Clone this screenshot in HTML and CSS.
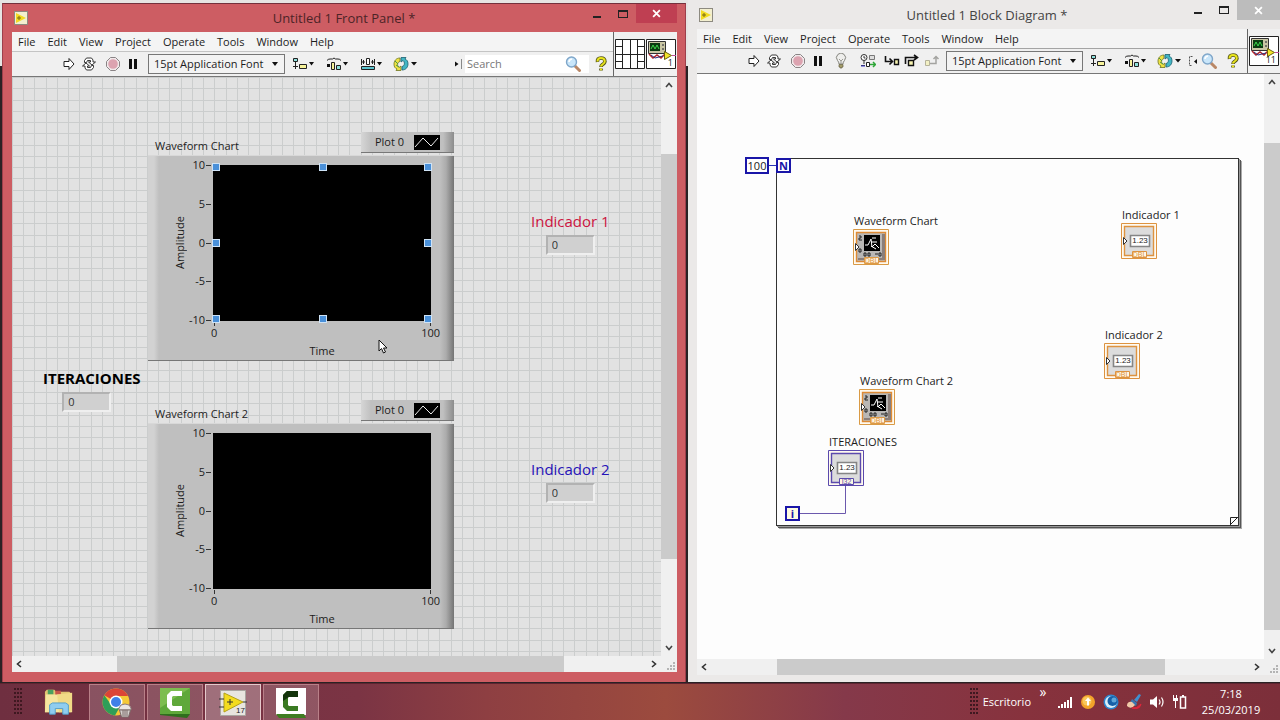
FILE: index.html
```html
<!DOCTYPE html>
<html lang="en">
<head>
<meta charset="utf-8">
<title>Untitled 1 Front Panel</title>
<link rel="stylesheet" href="styles.css">
</head>
<body>
<svg class="sprite" aria-hidden="true">
  <symbol id="i-vi" viewBox="0 0 14 14"><rect x=".5" y=".5" width="13" height="13" fill="#f3efcf" stroke="#8d8a80"/><path d="M2 2l10 5-10 5z" fill="#f3dc22"/><path d="M3 7h4M5 5v4" stroke="#7c6a10"/></symbol>
  <symbol id="i-run" viewBox="0 0 12 14"><path d="M1 4.500h5V1.500L11 7l-5 5.500v-3H1z" fill="#fff" stroke="#222"/></symbol>
  <symbol id="i-loop" viewBox="0 0 16 14"><path d="M3.500 5.500V3.500L5.500 1h5L12 3V5h2.500L11 8 7.500 5h2V3.500H6.500L5.500 5.500z" fill="#fff" stroke="#222" stroke-width=".9"/><path d="M12.500 8.500v2L10.500 13h-5L4 11V9H1.500L5 6l3.500 3h-2v1.500h3l1-2z" fill="#fff" stroke="#222" stroke-width=".9"/></symbol>
  <symbol id="i-abort" viewBox="0 0 14 14"><path d="M4.500.5h5l4 4v5l-4 4h-5l-4-4v-5z" fill="#f0e9ea" stroke="#8a8486"/><circle cx="7" cy="7" r="4.800" fill="#dca3b0"/></symbol>
  <symbol id="i-pause" viewBox="0 0 10 10"><path d="M1 0h3v10H1zM6 0h3v10H6z" fill="#111"/></symbol>
  <symbol id="i-align" viewBox="0 0 22 14"><path d="M1.500 1.500h4v3h-4z" fill="#8ee0dc" stroke="#222"/><path d="M3.500 5v7M1 9.500h5M8 11.500h1" stroke="#222" fill="none"/><path d="M7.500 7.500h7v4h-7z" fill="#f7f39a" stroke="#222"/><path d="M17 5h5l-2.500 3.500z" fill="#111"/></symbol>
  <symbol id="i-dist" viewBox="0 0 22 14"><path d="M1 3.500Q2 2 4 2h2.500L8 1l1.500 1H12q2 0 3 1.500" stroke="#222" fill="none"/><path d="M1 7h3v3H1z" fill="#111"/><path d="M5.500 5.500h3v7h-3z" fill="#f7f39a" stroke="#222"/><path d="M10.500 8.500h4v4h-4z" fill="#8ee0dc" stroke="#222"/><path d="M17 5h5l-2.500 3.500z" fill="#111"/></symbol>
  <symbol id="i-resize" viewBox="0 0 22 14"><path d="M1.500 2v6M14.500 2v6M2 5h3M11 5h3M3.500 3v4M12.500 3v4" stroke="#222" fill="none"/><path d="M6.500 1.500h3v6h-3z" fill="#fff" stroke="#222"/><path d="M1.500 9.500h13v3h-13z" fill="#5cc4cf" stroke="#222"/><path d="M17 5h5l-2.500 3.500z" fill="#111"/></symbol>
  <symbol id="i-order" viewBox="0 0 24 14"><path d="M7 1C3 1 1 4 1 7s1 4 3 5l-1 1.500h5V9L6 10.500C4 9 4 5 7 4.500z" fill="#eee344" stroke="#6e7522" stroke-width=".8"/><path d="M9 13c4 0 6-3 6-6s-1-4-3-5l1-1.500H8V5l2-1.500c2 1.500 2 5.500-1 6z" fill="#42b6c4" stroke="#1c5f70" stroke-width=".8"/><path d="M2 4l3 3M3 8l3 2" stroke="#4a9a48"/><path d="M18 5h6l-3 3.500z" fill="#111"/></symbol>
  <symbol id="i-mag" viewBox="0 0 16 16"><path d="M10 10l4.500 4.500" stroke="#b98766" stroke-width="3" stroke-linecap="round"/><circle cx="6.500" cy="6" r="5" fill="#c9e6fa" stroke="#7fa6c9" stroke-width="1.400"/><path d="M4 6q0-2.500 3-3" stroke="#fff" stroke-width="1.500" fill="none"/></symbol>
  <symbol id="i-help" viewBox="0 0 12 16"><path d="M2.500 6Q2 2 6 2t3.800 3.200Q10 7 7.500 8.500 6 9.500 6 11M6 12.500v2" fill="none" stroke="#555518" stroke-width="3.600"/><path d="M2.500 5.500Q2.500 2 6 2t3.800 3.200Q10 7 7.500 8.500 6 9.500 6 10.500M6 12.500v1.800" fill="none" stroke="#e9e51c" stroke-width="2"/></symbol>
  <symbol id="i-bulb" viewBox="0 0 12 16"><path d="M4 11Q4 9 2.500 7.500a4.500 4.500 0 1 1 7 0Q8 9 8 11z" fill="#eeeeec" stroke="#85857f"/><path d="M4 6l2 2 2-2M6 8v3" stroke="#9a9a94" fill="none"/><path d="M4 11.500h4V14H7v1H5v-1H4z" fill="#a39c6a" stroke="#6a6647" stroke-width=".7"/></symbol>
  <symbol id="i-retain" viewBox="0 0 16 14"><circle cx="4" cy="3.500" r="3" fill="#fff" stroke="#333"/><path d="M4 2v2h1.500M4 6.500V10M1 11.500h4" stroke="#333" fill="none"/><path d="M9.500 1.500h5v4h-5z" fill="#ddd" stroke="#777"/><path d="M6.500 8.500h3v4h-3z" fill="#fff" stroke="#222"/><path d="M1 12h4" stroke="#3a3ad0"/><path d="M10 10.500h5M13 8l2.500 2.500L13 13" stroke="#2ea638" stroke-width="1.500" fill="none"/></symbol>
  <symbol id="i-into" viewBox="0 0 16 12"><path d="M1.500 1v5.500H8M5.500 3.500l3 3-3 3" fill="none" stroke="#111" stroke-width="1.600"/><path d="M10.500 4.500h4v5h-4z" fill="#f7f3b0" stroke="#111" stroke-width="1.400"/></symbol>
  <symbol id="i-over" viewBox="0 0 16 12"><path d="M1.500 9V2.500H12M10 0l3.500 2.500L10 5" fill="none" stroke="#111" stroke-width="1.600"/><path d="M4.500 5.500h5v5h-5z" fill="#f7f3b0" stroke="#111" stroke-width="1.400"/></symbol>
  <symbol id="i-out" viewBox="0 0 16 12"><path d="M1.500 5.500h4v5h-4z" fill="#f2f0c4" stroke="#b5b29a"/><path d="M6 8.500h6V2M9.500 4L12 1.500 14.500 4" fill="none" stroke="#a3a3a0" stroke-width="1.500"/></symbol>
  <symbol id="i-conn" viewBox="0 0 30 30"><path d="M.5.500h29v29H.5z" fill="#fff" stroke="#222"/><path d="M7.500 0v30M15.500 0v30M22.500 0v30M7 15.500h16M0 7.500h7M0 15.500h7M0 22.500h7M23 7.500h7M23 15.500h7M23 22.500h7" stroke="#222"/></symbol>
  <symbol id="i-viicon" viewBox="0 0 30 30"><path d="M.5.500h29v29H.5z" fill="#fff" stroke="#222"/><path d="M2.500 2.500h17v12h-17z" fill="#c9c6a4" stroke="#333"/><path d="M4 4h10v8H4z" fill="#0b3a12"/><path d="M5 10l2-4 2 4 2-4 2 4" stroke="#3dd84c" fill="none"/><circle cx="17" cy="6" r="1" fill="#555"/><circle cx="17" cy="10" r="1" fill="#555"/><path d="M3 15l4 4 4-3 4 3 4-4" stroke="#b3262c" stroke-width="1.500" fill="none"/><path d="M5 16l4 3 8-2" stroke="#28307e" fill="none"/><path d="M18.500 12.500l7 4-7 4z" fill="#f3e42a" stroke="#6b6210"/><path d="M26 16.500h4" stroke="#c04a9c"/></symbol>
  <symbol id="i-up" viewBox="0 0 8 6"><path d="M1 5l3-3.500L7 5" fill="none" stroke="#444" stroke-width="1.600"/></symbol>
  <symbol id="i-down" viewBox="0 0 8 6"><path d="M1 1l3 3.500L7 1" fill="none" stroke="#444" stroke-width="1.600"/></symbol>
  <symbol id="i-left" viewBox="0 0 6 8"><path d="M5 1L1.500 4 5 7" fill="none" stroke="#333" stroke-width="1.600"/></symbol>
  <symbol id="i-right" viewBox="0 0 6 8"><path d="M1 1l3.500 3L1 7" fill="none" stroke="#333" stroke-width="1.600"/></symbol>
  <symbol id="i-sizer" viewBox="0 0 8 8"><path d="M6 0h2v2H6zM3 3h2v2H3zM6 3h2v2H6zM0 6h2v2H0zM3 6h2v2H3zM6 6h2v2H6z" fill="#b4b4b4"/></symbol>
  <symbol id="t-chart" viewBox="0 0 36 36"><path d="M.5.500h35v35H.5z" fill="#fffaf0" stroke="#d99a45"/><path d="M3.500 3.500h29v29h-29z" fill="#b9b7b5" stroke="#dd8a35" stroke-width="1.400"/><path d="M29 5h3v26H5v-2h24z" fill="#8b7f7a"/><path d="M11 6h16v16H11z" fill="#000"/><path d="M12 16h3l3-6 1 8 3-3 4 4M18 13h6M19 9h4M18 17l5 3" stroke="#fff" fill="none"/><path d="M6 7h2v2H6v2h3M6 20h2v3H6zM11 24h2v3h-2zM15 24h2v3h-2zM22 25h3M26 24h2v3h-2z" fill="none" stroke="#222"/><path d="M2.500 14.500L6 18l-3.500 3.500z" fill="#fff" stroke="#333"/><path d="M11.500 28.500h14v6h-14z" fill="#fff4dc" stroke="#dd9a45"/></symbol>
  <symbol id="t-num" viewBox="0 0 36 36"><path d="M.5.500h35v35H.5z" fill="#fffaf0" stroke="currentColor"/><path d="M3.500 3.500h29v29h-29z" fill="#dcdcdc" stroke="currentColor" stroke-width="1.400"/><path d="M9.500 12.500h19v11h-19z" fill="#fff" stroke="#858585" stroke-width="1.600"/><path d="M2.500 14.500L6 18l-3.500 3.500z" fill="#fff" stroke="#333"/><path d="M11.500 28.500h14v6h-14z" fill="#fff8e4" stroke="currentColor"/></symbol>
  <symbol id="i-cam" viewBox="0 0 30 30"><path d="M22 3H11L7 7v12l4 4h11v-5h-9l-1-1V9l1-1h9z" fill="currentColor"/></symbol>
</svg>

<main class="desktop">
  <section class="window window-front">
    <header class="titlebar">
      <svg class="app-icon"><use href="#i-vi"/></svg>
      <h1 class="title">Untitled 1 Front Panel *</h1>
      <div class="controls">
        <button class="ctl" aria-label="Minimize"><span class="min"></span></button>
        <button class="ctl" aria-label="Maximize"><span class="max"></span></button>
        <button class="ctl ctl-close" aria-label="Close"><svg class="x" viewBox="0 0 8 8"><path d="M1 1l6 6M7 1L1 7" stroke="#fff" stroke-width="1.600"/></svg></button>
      </div>
    </header>
    <div class="client">
      <div class="head">
        <div class="bars">
          <nav class="menu"><button>File</button><button>Edit</button><button>View</button><button>Project</button><button>Operate</button><button>Tools</button><button>Window</button><button>Help</button></nav>
          <div class="toolbar">
            <button class="tool w20" aria-label="Run"><svg class="g12"><use href="#i-run"/></svg></button>
            <button class="tool w20" aria-label="Run continuously"><svg class="g16"><use href="#i-loop"/></svg></button>
            <button class="tool w28" aria-label="Abort"><svg class="g14"><use href="#i-abort"/></svg></button>
            <button class="tool w12" aria-label="Pause"><svg class="g10"><use href="#i-pause"/></svg></button>
            <span class="font-pick"><select aria-label="Font"><option>15pt Application Font</option></select></span>
            <button class="tool w34" aria-label="Align"><svg class="g22"><use href="#i-align"/></svg></button>
            <button class="tool w34" aria-label="Distribute"><svg class="g22"><use href="#i-dist"/></svg></button>
            <button class="tool w34" aria-label="Resize"><svg class="g22"><use href="#i-resize"/></svg></button>
            <button class="tool w34" aria-label="Reorder"><svg class="g24"><use href="#i-order"/></svg></button>
            <span class="spacer"></span>
            <svg class="more" viewBox="0 0 8 10"><path d="M0 2.500L3.500 5 0 7.500z" fill="#111"/><path d="M6.500 0v10" stroke="#888"/></svg>
            <label class="search"><input type="text" placeholder="Search" aria-label="Search"><svg class="g16 tall"><use href="#i-mag"/></svg></label>
            <button class="tool w24" aria-label="Help"><svg class="g12 tall"><use href="#i-help"/></svg></button>
          </div>
        </div>
        <div class="vi-box">
          <svg class="g30"><use href="#i-conn"/></svg>
          <span class="vi"><svg class="g30"><use href="#i-viicon"/></svg><span class="vi-num">1</span></span>
        </div>
      </div>
      <div class="work">
        <div class="canvas panel">
          <section class="chart chart-1">
            <div class="chart-top"><h2 class="chart-name">Waveform Chart</h2>
              <div class="legend"><span>Plot 0</span><svg viewBox="0 0 26 15"><path d="M0 0h26v15H0z"/><path d="M1 12l8-9 8 8 7-8" fill="none" stroke="#eee"/></svg></div></div>
            <div class="chart-body">
              <span class="y-name">Amplitude</span>
              <div class="y-axis"><span>10</span><span>5</span><span>0</span><span>-5</span><span>-10</span></div>
              <div class="plot"><i class="h tl"></i><i class="h tc"></i><i class="h tr"></i><i class="h ml"></i><i class="h mr"></i><i class="h bl"></i><i class="h bc"></i><i class="h br"></i></div>
              <div class="x-axis"><span>0</span><span>100</span></div>
              <span class="x-name">Time</span>
            </div>
          </section>
          <section class="chart chart-2">
            <div class="chart-top"><h2 class="chart-name">Waveform Chart 2</h2>
              <div class="legend"><span>Plot 0</span><svg viewBox="0 0 26 15"><path d="M0 0h26v15H0z"/><path d="M1 12l8-9 8 8 7-8" fill="none" stroke="#eee"/></svg></div></div>
            <div class="chart-body">
              <span class="y-name">Amplitude</span>
              <div class="y-axis"><span>10</span><span>5</span><span>0</span><span>-5</span><span>-10</span></div>
              <div class="plot"></div>
              <div class="x-axis"><span>0</span><span>100</span></div>
              <span class="x-name">Time</span>
            </div>
          </section>
          <label class="readout r-iter"><b>ITERACIONES</b><input type="text" value="0" readonly></label>
          <label class="readout r-one"><span>Indicador 1</span><input type="text" value="0" readonly></label>
          <label class="readout r-two"><span>Indicador 2</span><input type="text" value="0" readonly></label>
          <svg class="cursor" viewBox="0 0 10 15"><path d="M1 1v11l2.500-2.500L5.500 14l2-1-2-4H9z" fill="#fff" stroke="#111"/></svg>
        </div>
        <div class="vbar"><svg class="cap"><use href="#i-up"/></svg><div class="track"><span class="thumb"></span></div><svg class="cap"><use href="#i-down"/></svg></div>
        <div class="hbar"><svg class="cap"><use href="#i-left"/></svg><div class="track"><span class="thumb"></span></div><svg class="cap"><use href="#i-right"/></svg></div>
        <div class="corner"><svg><use href="#i-sizer"/></svg></div>
      </div>
    </div>
  </section>

  <section class="window window-block">
    <header class="titlebar">
      <svg class="app-icon"><use href="#i-vi"/></svg>
      <h1 class="title">Untitled 1 Block Diagram *</h1>
      <div class="controls">
        <button class="ctl" aria-label="Minimize"><span class="min"></span></button>
        <button class="ctl" aria-label="Maximize"><span class="max"></span></button>
        <button class="ctl ctl-close" aria-label="Close"><svg class="x" viewBox="0 0 8 8"><path d="M1 1l6 6M7 1L1 7" stroke="#fff" stroke-width="1.600"/></svg></button>
      </div>
    </header>
    <div class="client">
      <div class="head">
        <div class="bars">
          <nav class="menu"><button>File</button><button>Edit</button><button>View</button><button>Project</button><button>Operate</button><button>Tools</button><button>Window</button><button>Help</button></nav>
          <div class="toolbar">
            <button class="tool w20" aria-label="Run"><svg class="g12"><use href="#i-run"/></svg></button>
            <button class="tool w20" aria-label="Run continuously"><svg class="g16"><use href="#i-loop"/></svg></button>
            <button class="tool w28" aria-label="Abort"><svg class="g14"><use href="#i-abort"/></svg></button>
            <button class="tool w12" aria-label="Pause"><svg class="g10"><use href="#i-pause"/></svg></button>
            <button class="tool w34" aria-label="Highlight execution"><svg class="g12 tall"><use href="#i-bulb"/></svg></button>
            <button class="tool w20" aria-label="Retain wire values"><svg class="g16"><use href="#i-retain"/></svg></button>
            <button class="tool w28" aria-label="Step into"><svg class="g16"><use href="#i-into"/></svg></button>
            <button class="tool w12" aria-label="Step over"><svg class="g16"><use href="#i-over"/></svg></button>
            <button class="tool w28" aria-label="Step out"><svg class="g16"><use href="#i-out"/></svg></button>
            <span class="font-pick"><select aria-label="Font"><option>15pt Application Font</option></select></span>
            <button class="tool w34" aria-label="Align"><svg class="g22"><use href="#i-align"/></svg></button>
            <button class="tool w34" aria-label="Distribute"><svg class="g22"><use href="#i-dist"/></svg></button>
            <button class="tool w34" aria-label="Reorder"><svg class="g24"><use href="#i-order"/></svg></button>
            <span class="spacer"></span>
            <svg class="more" viewBox="0 0 8 10"><path d="M3.500.5H.5v9h3" stroke="#555" stroke-dasharray="2 1" fill="none"/><path d="M8 3L5 5.500 8 8z" fill="#111"/></svg>
            <button class="tool w20" aria-label="Search"><svg class="g16 tall"><use href="#i-mag"/></svg></button>
            <button class="tool w28" aria-label="Help"><svg class="g12 tall"><use href="#i-help"/></svg></button>
          </div>
        </div>
        <div class="vi-box">
          <span class="vi"><svg class="g30"><use href="#i-viicon"/></svg><span class="vi-num">11</span></span>
        </div>
      </div>
      <div class="work">
        <div class="canvas diagram">
          <div class="loop"><svg class="fold" viewBox="0 0 8 8"><path d="M.5 8V.5H8M.5 7.500l7-7" fill="none" stroke="#222"/></svg></div>
          <svg class="wires" viewBox="0 0 120 370"><path d="M21 9.500h10" stroke="#2a35b8"/><path d="M52 357.500h46.500V328" fill="none" stroke="#6b58ad"/></svg>
          <span class="term-box hundred">100</span>
          <span class="term-box count">N</span>
          <span class="term-box iter">i</span>
          <div class="node n-chart1"><span>Waveform Chart</span><div class="term orange"><svg><use href="#t-chart"/></svg><small>DBL</small></div></div>
          <div class="node n-chart2"><span>Waveform Chart 2</span><div class="term orange"><svg><use href="#t-chart"/></svg><small>DBL</small></div></div>
          <div class="node n-ind1"><span>Indicador 1</span><div class="term orange"><svg><use href="#t-num"/></svg><em>1.23</em><small>DBL</small></div></div>
          <div class="node n-ind2"><span>Indicador 2</span><div class="term orange"><svg><use href="#t-num"/></svg><em>1.23</em><small>DBL</small></div></div>
          <div class="node n-iter"><span>ITERACIONES</span><div class="term violet"><svg><use href="#t-num"/></svg><em>1.23</em><small>I32</small></div></div>
        </div>
        <div class="vbar"><svg class="cap"><use href="#i-up"/></svg><div class="track"><span class="thumb"></span></div><svg class="cap"><use href="#i-down"/></svg></div>
        <div class="hbar"><svg class="cap"><use href="#i-left"/></svg><div class="track"><span class="thumb"></span></div><svg class="cap"><use href="#i-right"/></svg></div>
        <div class="corner"><svg><use href="#i-sizer"/></svg></div>
      </div>
    </div>
  </section>
</main>

<footer class="taskbar">
  <span class="grip"></span>
  <button class="task plain" aria-label="File Explorer"><svg viewBox="0 0 32 30"><path d="M1 4l2-2h8l2 2h14l2 2v20H1z" fill="#e2c672"/><path d="M4 2h6v5H4z" fill="#4aa060"/><path d="M12 3h6v5h-6z" fill="#c8554a"/><path d="M2 7h27l1 19H1z" fill="#f6e6a0"/><path d="M14 7l16-2v20l-14 1z" fill="#f1da86"/><path d="M6 28V18l3-2h14l3 2v10h-6v-6h-8v6z" fill="#8fcdf0" stroke="#4f9ecb"/></svg></button>
  <button class="task" aria-label="Chrome"><svg viewBox="0 0 30 30"><circle cx="14" cy="14" r="13.500" fill="#f5c936"/><path d="M14 14L2.300 7.200A13.500 13.500 0 0 1 25.700 7.200L26 8H14z" fill="#dc4437"/><path d="M2.300 7.200A13.500 13.500 0 0 0 13 27.500l5-9-9-2z" fill="#2f9e58"/><circle cx="14" cy="14" r="6.500" fill="#fff"/><circle cx="14" cy="14" r="5" fill="#3f7fe8"/><path d="M17 20q1-4 6-4t6 4v2H17z" fill="#ece7e4" stroke="#8c7a78"/><path d="M17.500 22h11l-2 7h-7z" fill="#d5cfcd" stroke="#7d6d6a"/><path d="M21 22v6M23 22v6M25 22v6" stroke="#7d6d6a"/></svg></button>
  <button class="task" aria-label="Camtasia"><svg viewBox="0 0 30 30"><path d="M0 0h30v26l-3 4-27-3z" fill="#2f6f1d"/><path d="M0 0h30v26H0z" fill="#5fa83a"/><path d="M0 0h30L0 20z" fill="#7dbd50"/><use href="#i-cam" color="#fff"/></svg></button>
  <button class="task active" aria-label="LabVIEW"><svg viewBox="0 0 30 30"><path d="M2.500 2.500h25v25h-25z" fill="#e8e5df" stroke="#aaa5a0"/><path d="M6 5l19 9-19 10z" fill="#f4dc1e" stroke="#b3a018"/><path d="M9 14h6M12 11v6M1 11h5M1 19h5M25 14h4" stroke="#333"/></svg><span class="badge">17</span></button>
  <button class="task" aria-label="Camtasia Recorder"><svg viewBox="0 0 30 30"><path d="M0 0h30v27H0z" fill="#fff"/><path d="M0 26h28l2 4H3z" fill="#3f7d22"/><use href="#i-cam" color="#3a7a22"/><path d="M22 3H11L7 7v6l6-4h9z" fill="#14340c"/></svg></button>
  <span class="spacer"></span>
  <span class="grip"></span>
  <button class="desk">Escritorio</button>
  <button class="chev" aria-label="More">»</button>
  <div class="tray">
    <svg viewBox="0 0 16 16"><path d="M1 12h2v2H1zM4 10h2v4H4zM7 8h2v6H7zM10 6h2v8h-2zM13 3h2v11h-2z" fill="#fff"/></svg>
    <svg viewBox="0 0 16 16"><circle cx="8" cy="8" r="7" fill="#f3a32a"/><circle cx="7" cy="7" r="4.500" fill="#f9c75a"/><path d="M8 3.500L11 7H9v4.500H7V7H5z" fill="#fff"/></svg>
    <svg viewBox="0 0 16 16"><circle cx="8" cy="8" r="7.500" fill="#2d86cf"/><circle cx="8" cy="8" r="6" fill="#d9edf9"/><circle cx="9.500" cy="7" r="5" fill="#1560a8"/><circle cx="11" cy="6" r="2.500" fill="#5fa6d8"/></svg>
    <svg viewBox="0 0 16 16"><path d="M13 0l2 1-4 7-3-2z" fill="#3f8fd0"/><path d="M6 5l5 4-1 3-6-3z" fill="#3a77b0"/><path d="M1 11q1-4 5-3l3 3q-4 5-8 1z" fill="#f0c9a8"/><path d="M6 14q5 1 9-4-1 6-9 4z" fill="#e0263a" stroke="#e0263a"/></svg>
    <svg viewBox="0 0 16 16"><path d="M1 5.500h3L8 2v12l-4-3.500H1z" fill="#fff"/><path d="M10 5.500q2 2.500 0 5M12.500 3.500q3 4.500 0 9" stroke="#fff" fill="none" stroke-width="1.200"/></svg>
    <svg viewBox="0 0 16 16"><path d="M8.500 3h5v11h-5z" fill="none" stroke="#fff" stroke-width="1.500"/><path d="M10 1h2v2h-2zM1 1h1v3h2V1h1v3h1v3H4v7H3V7H1z" fill="#fff"/></svg>
  </div>
  <time class="clock"><span>7:18</span><span>25/03/2019</span></time>
</footer>
</body>
</html>
```

FILE: styles.css
```css
* { box-sizing: border-box; }
body {
  margin: 0;
  min-height: 100vh;
  display: flex;
  flex-direction: column;
  font: 11px/16px "Open Sans", "Noto Sans", sans-serif;
  color: #1c1c1c;
  overflow: hidden;
}
button, input, select { font: inherit; color: inherit; border: 0; background: none; padding: 0; margin: 0; }
h1, h2 { margin: 0; font-weight: 400; }
svg { display: block; flex: none; }
.sprite { position: absolute; width: 0; height: 0; }
.spacer { flex: 1; }

.desktop {
  flex: 1;
  display: grid;
  grid-template-columns: 684fr 592fr;
  gap: 2px;
  padding: 0 0 1px 2px;
  background: linear-gradient(#e6e5e3 66px, #2a2224 66px);
}
.window { display: flex; flex-direction: column; min-width: 0; }
.window-front { margin-top: 3px; padding: 0 8px 10px 9px; background: #cd5d63; border: 1px solid #9d3f4b; border-top-color: #74313c; border-bottom: 0; }
.window-block { padding: 0 0 7px 9px; background: #ebe9e8; }
.titlebar { display: flex; align-items: center; height: 28px; }
.window-block .titlebar { height: 29px; }
.app-icon { width: 14px; height: 14px; margin-left: 2px; }
.title { flex: 1; text-align: center; font-size: 13px; line-height: 20px; color: #4c2427; padding-left: 76px; }
.window-block .title { color: #444; padding-left: 76px; }
.controls { display: flex; align-self: flex-start; }
.ctl { width: 26px; height: 19px; display: grid; place-items: center; }
.ctl-close { width: 41px; background: #bf3f52; }
.window-block .ctl-close { background: #bcbcbc; width: 43px; height: 20px; }
.min { width: 8px; height: 2px; background: #222; margin-top: 6px; }
.max { width: 10px; height: 8px; border: 1px solid #222; border-top-width: 2px; }
.x { width: 9px; height: 9px; }

.client { flex: 1; display: flex; flex-direction: column; background: #f0f0f0; }
.head { display: flex; border-bottom: 1px solid #777; }
.bars { flex: 1; min-width: 0; }
.menu { display: flex; height: 20px; align-items: center; border-bottom: 1px solid #c4c4c4; background: #f4f4f4; }
.menu button { padding: 0 6px; line-height: 18px; white-space: nowrap; }
.toolbar { display: flex; align-items: center; height: 24px; padding-left: 47px; }
.window-block .menu { border-bottom-color: #a4a4a4; }
.tool { display: flex; justify-content: center; align-items: center; height: 20px; flex: none; }
.w12 { width: 12px; } .w20 { width: 20px; } .w24 { width: 24px; } .w28 { width: 28px; } .w34 { width: 34px; }
.g10 { width: 10px; height: 10px; }
.g12 { width: 12px; height: 14px; }
.g14 { width: 14px; height: 14px; }
.g16 { width: 16px; height: 14px; }
.g22 { width: 22px; height: 14px; }
.g24 { width: 24px; height: 14px; }
.g30 { width: 30px; height: 30px; }
.tall { height: 16px; }
.font-pick { position: relative; flex: none; width: 137px; margin: 0 1px 0 9px; }
.window-block .font-pick { margin-left: 0; }
.font-pick select { appearance: none; width: 100%; height: 20px; padding: 0 5px; background: #f3f3f3; border: 1px solid #777; display: block; }
.font-pick::after { content: ""; position: absolute; right: 7px; top: 8px; border: 3px solid transparent; border-top: 4px solid #111; border-bottom: 0; pointer-events: none; }
.more { width: 8px; height: 10px; margin-right: 2px; }
.search { display: flex; align-items: center; width: 124px; height: 18px; padding: 0 8px 0 2px; background: #fff; }
.search input { flex: 1; min-width: 0; outline: 0; }
.search input::placeholder { color: #777; opacity: 1; }
.vi-box { display: flex; align-items: flex-end; gap: 1px; padding: 0 1px 7px; border-left: 1px solid #666; }
.vi { position: relative; }
.vi-num { position: absolute; right: 3px; bottom: 0; font-size: 9px; line-height: 12px; }

.work { flex: 1; display: grid; grid-template: 1fr 16px / 1fr 16px; }
.canvas { position: relative; overflow: hidden; }
.panel {
  --line: #cbcdcd;
  background:
    repeating-linear-gradient(90deg, var(--line) 0 1px, transparent 1px 11px, var(--line) 11px 12px, transparent 12px 22px, var(--line) 22px 23px, transparent 23px 34px, var(--line) 34px 35px, transparent 35px 45px),
    repeating-linear-gradient(var(--line) 0 1px, transparent 1px 11px, var(--line) 11px 12px, transparent 12px 23px, var(--line) 23px 24px, transparent 24px 34px, var(--line) 34px 35px, transparent 35px 45px),
    #e2e2e2;
}
.diagram { background: #fdfdfd; }
.vbar, .hbar { display: flex; background: #f0f0f0; }
.vbar { flex-direction: column; }
.track { flex: 1; display: flex; }
.vbar .track { flex-direction: column; }
.thumb { background: #cbcbcb; }
.vbar .cap { width: 8px; height: 6px; margin: 5px 4px; }
.hbar .cap { width: 6px; height: 8px; margin: 4px; }
.window-front .vbar .thumb { height: 74%; margin-top: 61px; }
.window-front .hbar .thumb { width: 72%; margin-left: 91px; }
.window-block .vbar .thumb { height: 88%; margin-top: 53px; }
.window-block .hbar .thumb { width: 72%; margin-left: 66px; }
.corner { display: flex; align-items: flex-end; justify-content: flex-end; padding: 2px; }
.corner svg { width: 8px; height: 8px; }

.chart { position: absolute; left: 136px; width: 306px; }
.chart-1 { top: 55px; }
.chart-2 { top: 323px; }
.chart-top { display: flex; justify-content: space-between; height: 23px; }
.chart-name { font-size: 11px; line-height: 16px; padding: 6px 7px 0; }
.legend { display: flex; align-items: center; justify-content: flex-end; gap: 10px; width: 93px; height: 21px; padding: 0 14px 0 0; background: linear-gradient(90deg, #d6d6d6, #c0c0c0 10px 82px, #8c8c8c); border-bottom: 1px solid #777; }
.legend svg { width: 26px; height: 15px; }
.chart-body {
  display: grid;
  grid-template: 156px 22px 16px / 24px 41px 218px;
  padding: 9px 0 1px;
  background: linear-gradient(90deg, #d2d2d2 0 6px, #bfbfbf 11px 292px, #acacac 298px, #747474);
  border-top: 1px solid #d8d8d8;
  border-bottom: 1px solid #777;
}
.y-name { writing-mode: vertical-rl; transform: rotate(180deg); justify-self: end; margin-right: -16px; text-align: center; width: 16px; font-size: 11px; }
.y-axis { display: flex; flex-direction: column; justify-content: space-between; margin: -8px 0 -7px; text-align: right; padding-right: 2px; }
.y-axis span::after { content: ""; display: inline-block; width: 5px; height: 1px; margin-left: 1px; vertical-align: 3px; background: #333; }
.plot { position: relative; background: #000; }
.x-axis { grid-column: 3; display: flex; justify-content: space-between; margin: 0 -9px 0 -2px; }
.x-axis span { display: flex; flex-direction: column; align-items: center; line-height: 14px; }
.x-axis span::before { content: ""; width: 1px; height: 4px; margin-top: 1px; background: #333; }
.x-name { grid-column: 3; text-align: center; }
.h { position: absolute; width: 8px; height: 8px; background: #4a90d9; border: 1px solid #cfe3f6; }
.tl, .ml, .bl { left: -1px; }
.tc, .bc { left: 106px; }
.tr, .mr, .br { right: -1px; }
.tl, .tc, .tr { top: -2px; }
.ml, .mr { top: 74px; }
.bl, .bc, .br { bottom: -2px; }

.readout { position: absolute; display: flex; flex-direction: column; align-items: center; gap: 3px; font-size: 15px; line-height: 22px; white-space: nowrap; }
.readout input { width: 49px; height: 20px; padding: 0 4px; font-size: 11px; color: #333; background: #d0d0d0; border: 2px solid; border-color: #b2b2b2 #efefef #efefef #b2b2b2; }
.r-iter { left: 31px; top: 290px; color: #000; }
.r-iter input { margin-right: 10px; }
.r-one { left: 519px; top: 133px; color: #cc1440; }
.r-two { left: 519px; top: 381px; color: #2613b8; }
.cursor { position: absolute; left: 366px; top: 262px; width: 10px; height: 15px; }

.loop { position: absolute; left: 79px; top: 84px; width: 463px; height: 368px; border: 1px solid #333; box-shadow: 1px 1px #999, 2px 2px #555, 3px 3px #aaa; background: #fdfdfd; }
.fold { position: absolute; right: 0; bottom: 0; width: 8px; height: 8px; }
.wires { position: absolute; left: 50px; top: 82px; width: 120px; height: 370px; }
.term-box { position: absolute; border: 2px solid #1a16a8; background: #fff; height: 15px; line-height: 11px; text-align: center; }
.hundred { left: 48px; top: 83px; width: 24px; height: 17px; line-height: 13px; }
.count, .iter { width: 15px; font-weight: 700; color: #1a16a8; }
.count { left: 79px; top: 84px; }
.iter { left: 88px; top: 432px; background: #fdfbe0; }
.node { position: absolute; white-space: nowrap; }
.node > span { display: block; margin-left: 1px; }
.term { position: relative; width: 36px; height: 36px; }
.term svg { width: 36px; height: 36px; }
.orange { color: #dd9340; }
.violet { color: #5b4aad; }
.term em { position: absolute; left: 9px; top: 12px; width: 20px; text-align: center; font: 8px/12px "Liberation Sans", sans-serif; color: #222; }
.term small { position: absolute; left: 11px; bottom: 0; width: 15px; text-align: center; font: 7px/8px "Liberation Sans", sans-serif; }
.n-chart1 { left: 156px; top: 139px; }
.n-chart2 { left: 162px; top: 299px; }
.n-ind1 { left: 424px; top: 133px; }
.n-ind2 { left: 407px; top: 253px; }
.n-iter { left: 131px; top: 360px; }

.taskbar {
  display: flex;
  align-items: center;
  height: 37px;
  padding-left: 14px;
  color: #fff;
  background: linear-gradient(90deg, #6f2f40, #7b3444 28%, #8e3f42 38%, #9c4b3e 52%, #85394a 66%, #87323d 80%, #7c2f3a);
  border-top: 1px solid #5d2430;
}
.grip { width: 8px; height: 28px; flex: none; background: radial-gradient(circle at 1px 1px, #3e1820 1px, transparent 1px) 0 0 / 3px 4px; }
.task { position: relative; display: grid; place-items: center; width: 56px; height: 36px; margin-right: 2px; border: 1px solid #b98088; border-bottom: 0; background: #ffffff2b; }
.task svg { width: 30px; height: 30px; }
.task.plain { width: 67px; margin: 0; border: 0; background: none; padding-left: 6px; }
.task.active { background: #ffffff4d; border-color: #e5c9cb; }
.badge { position: absolute; right: 15px; bottom: 4px; font: 8px/10px "Liberation Sans", sans-serif; color: #222; }
.desk { padding: 0 2px 0 5px; }
.chev { align-self: flex-start; width: 12px; font-size: 14px; line-height: 16px; margin: 0 8px 0 4px; }
.tray { display: flex; gap: 7px; }
.tray svg { width: 16px; height: 16px; }
.clock { width: 86px; margin-right: 6px; display: flex; flex-direction: column; align-items: center; font-size: 11px; line-height: 16px; }
```
